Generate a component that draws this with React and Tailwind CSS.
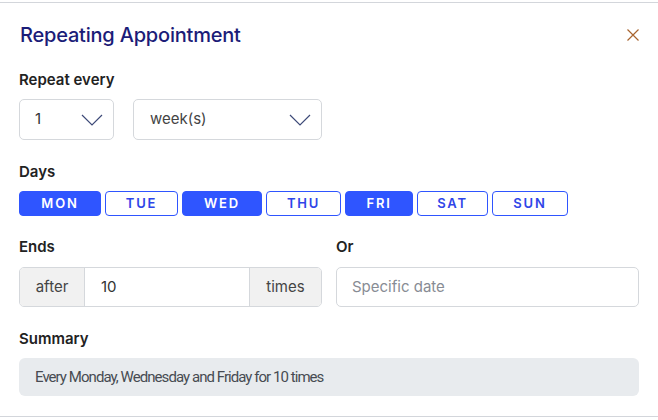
import { useState } from "react";

const days = [
  { label: "MON", on: true, w: "w-[82px]" },
  { label: "TUE", on: false, w: "w-[73px]" },
  { label: "WED", on: true, w: "w-[80px]" },
  { label: "THU", on: false, w: "w-[75px]" },
  { label: "FRI", on: true, w: "w-[68px]" },
  { label: "SAT", on: false, w: "w-[71px]" },
  { label: "SUN", on: false, w: "w-[76px]" },
];

function Chevron() {
  return (
    <svg width="22" height="12" viewBox="0 0 22 12" fill="none" stroke="#3d4a78" strokeWidth="1.2">
      <path d="M1 1 L11 11 L21 1" />
    </svg>
  );
}

export default function App() {
  const [selected, setSelected] = useState(days.map((d) => d.on));

  return (
    <div className="w-[658px] h-[420px] bg-white pt-[2px] font-['Inter',sans-serif] text-[#222]">
      <div className="h-[415px] border-t border-b border-[#d3d6db]">
        {/* Header */}
        <div className="flex items-center justify-between pt-[18px] pl-[20px] pr-[19px]">
          <h1 className="text-[20px] leading-[28px] font-medium text-[#1b1c78] tracking-[-0.2px]">Repeating Appointment</h1>
          <svg width="12" height="12" viewBox="0 0 12 12" stroke="#a8642f" strokeWidth="1.2">
            <path d="M0.5 0.5 L11.5 11.5 M11.5 0.5 L0.5 11.5" />
          </svg>
        </div>

        <div className="px-[19px]">
          <div className="mt-[21px] text-[15px] leading-[20px] font-semibold">Repeat every</div>
          <div className="mt-[9px] flex gap-[19px]">
            <div className="w-[95px] h-[41px] border border-[#d5d8dc] rounded-[5px] flex items-center justify-between pl-[15px] pr-[10px] text-[15px] text-[#333]">
              <span>1</span>
              <Chevron />
            </div>
            <div className="w-[189px] h-[41px] border border-[#d5d8dc] rounded-[5px] flex items-center justify-between pl-[16px] pr-[10px] text-[15px] text-[#444]">
              <span>week(s)</span>
              <Chevron />
            </div>
          </div>

          <div className="mt-[22px] text-[15px] leading-[20px] font-semibold">Days</div>
          <div className="mt-[9px] flex gap-[4px]">
            {days.map((d, i) => (
              <button
                key={d.label}
                onClick={() => setSelected((s) => s.map((v, j) => (j === i ? !v : v)))}
                className={
                  "h-[25px] rounded-[4px] border border-[#2f55ff] text-[13px] font-semibold tracking-[1.8px] flex items-center justify-center " +
                  d.w +
                  (selected[i] ? " bg-[#2f55ff] text-white" : " bg-white text-[#2f45e8]")
                }
              >
                {d.label}
              </button>
            ))}
          </div>

          <div className="mt-[21px] grid grid-cols-2 gap-[14px]">
            <div>
              <div className="text-[15px] leading-[20px] font-semibold">Ends</div>
              <div className="mt-[10px] h-[40px] flex border border-[#d5d8dc] rounded-[5px] overflow-hidden text-[15px] text-[#444]">
                <div className="w-[65px] bg-[#f1f1f1] border-r border-[#d5d8dc] flex items-center justify-center">after</div>
                <div className="flex-1 flex items-center pl-[16px] text-[#333]">10</div>
                <div className="w-[72px] bg-[#f1f1f1] border-l border-[#d5d8dc] flex items-center justify-center">times</div>
              </div>
            </div>
            <div>
              <div className="text-[15px] leading-[20px] font-semibold">Or</div>
              <div className="mt-[10px] h-[40px] border border-[#d5d8dc] rounded-[5px] flex items-center pl-[15px] text-[15px] text-[#888c94]">
                Specific date
              </div>
            </div>
          </div>

          <div className="mt-[22px] text-[15px] leading-[20px] font-semibold">Summary</div>
          <div className="mt-[9px] h-[38px] rounded-[6px] bg-[#e8ebee] flex items-center pl-[16px] font-['Roboto',sans-serif] text-[15px] tracking-[-0.95px] text-[#474b52]">
            Every Monday, Wednesday and Friday for 10 times
          </div>
        </div>
      </div>
    </div>
  );
}
